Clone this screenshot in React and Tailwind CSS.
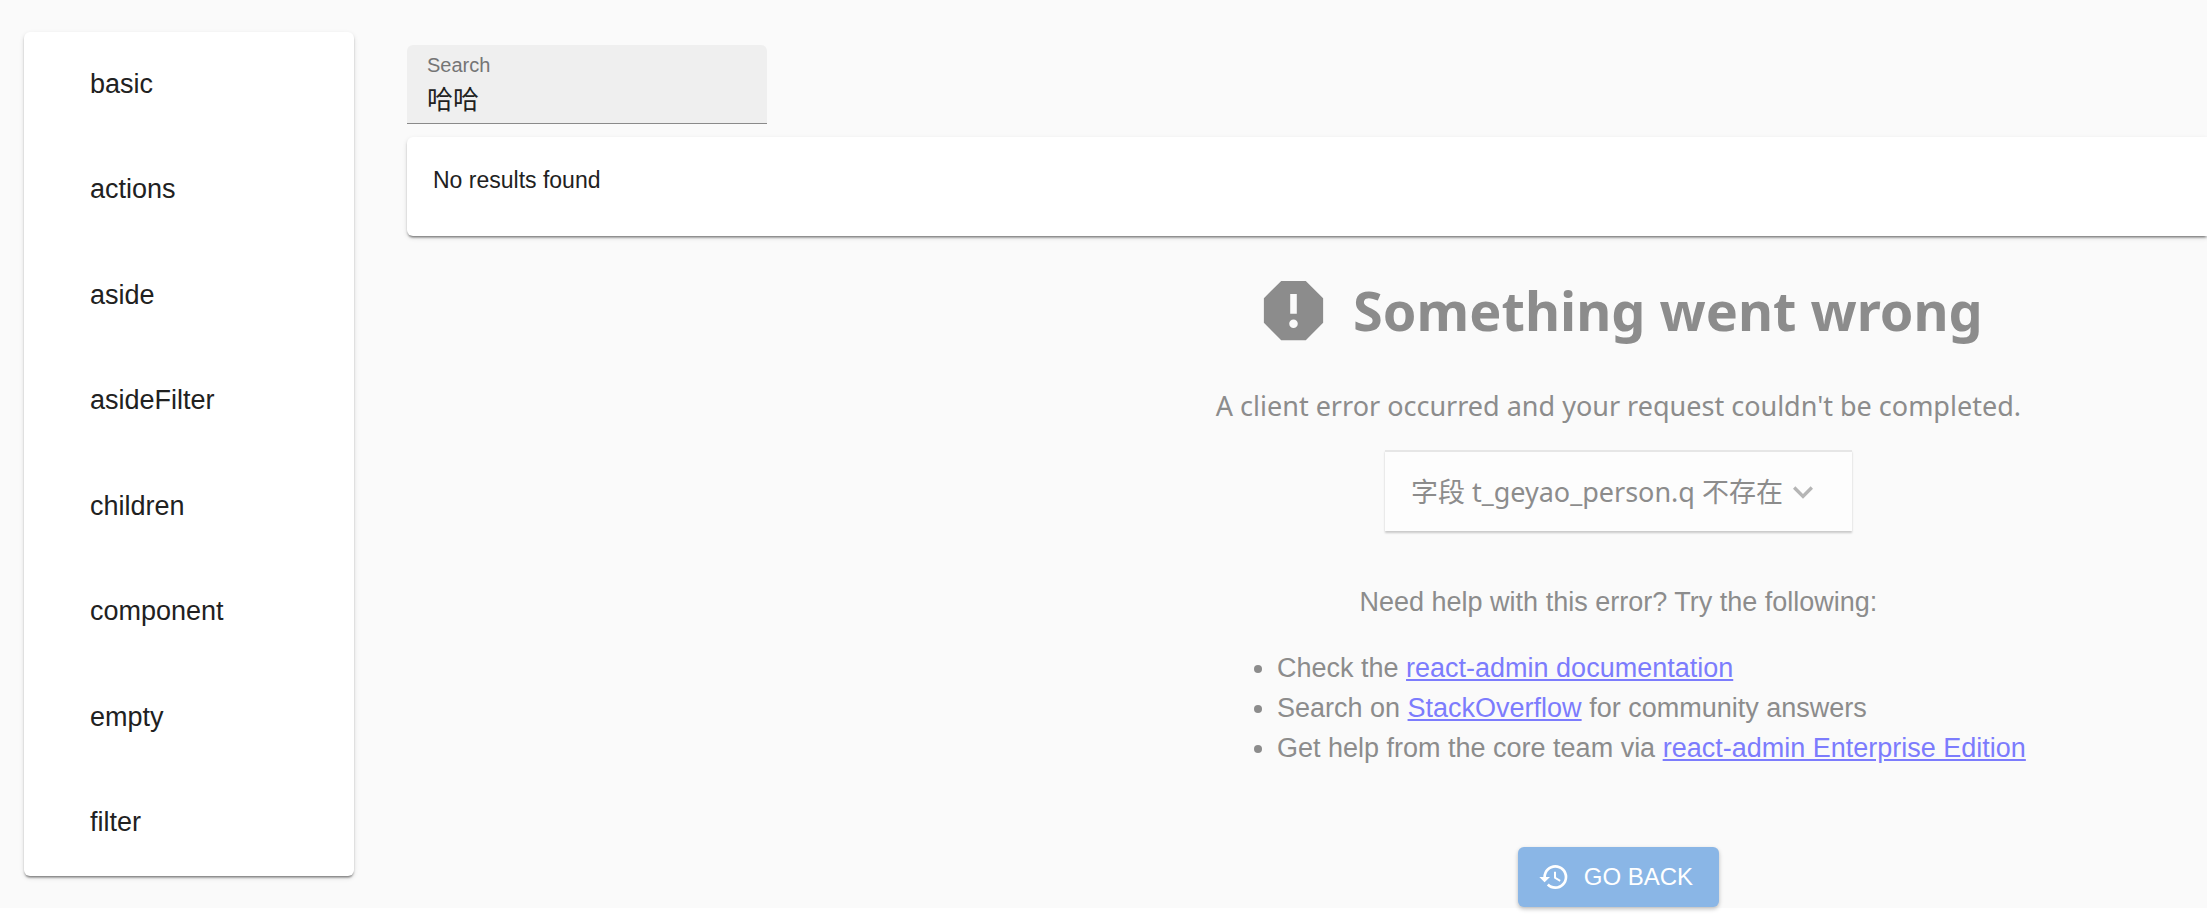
import { useState } from 'react';
import { MdExpandMore, MdHistory, MdReport } from 'react-icons/md';

const MENU = ['basic', 'actions', 'aside', 'asideFilter', 'children', 'component', 'empty', 'filter'];

const HELP_LINKS = [
  { before: 'Check the ', label: 'react-admin documentation', after: '' },
  { before: 'Search on ', label: 'StackOverflow', after: ' for community answers' },
  { before: 'Get help from the core team via ', label: 'react-admin Enterprise Edition', after: '' },
];

const cardShadow = 'shadow-[0_3px_2px_-2px_rgba(0,0,0,0.3),0_2px_2px_0_rgba(0,0,0,0.2),0_2px_5px_0_rgba(0,0,0,0.12)]';

function Sidebar() {
  return (
    <nav className={`flex h-[844px] w-[330px] shrink-0 flex-col rounded-md bg-white ${cardShadow}`}>
      {MENU.map((item) => (
        <a key={item} href={`#${item}`} className="flex flex-1 items-center px-[66px] pb-[2px] text-[27px] text-[#212121]">
          {item}
        </a>
      ))}
    </nav>
  );
}

function SearchField() {
  const [query, setQuery] = useState('哈哈');

  return (
    <div className="flex h-[79px] w-[360px] flex-col rounded-t-md border-b border-[#8a8a8a] bg-[#efefef] px-5 pt-2">
      <label htmlFor="search" className="text-[20px] leading-6 text-[#757575]">
        Search
      </label>
      <input
        id="search"
        value={query}
        onChange={(e) => setQuery(e.target.value)}
        className="w-full bg-transparent text-[26px] leading-[46px] text-[#212121] outline-none"
      />
    </div>
  );
}

function ErrorPanel() {
  return (
    <section className="flex flex-col items-center pl-[34.6%] text-[27px] leading-10 text-[#8c8c8c]">
      <div className="mt-[35px] flex flex-col items-center font-['Noto_Sans','Noto_Sans_CJK_SC',sans-serif]">
        <h1 className="flex items-center gap-5 text-[54px] leading-[79px] font-bold whitespace-nowrap">
          <MdReport className="size-[79px]" /> Something went wrong
        </h1>
        <p className="mt-9 whitespace-nowrap">A client error occurred and your request couldn't be completed.</p>
        <button
          type="button"
          className="mt-6 flex h-[81px] w-[467px] items-center border-t-2 border-[#e6e6e6] bg-[#fdfdfd] px-[26px] whitespace-nowrap shadow-[0_2px_2px_0_rgba(0,0,0,0.2)]"
        >
          字段 t_geyao_person.q 不存在
          <MdExpandMore className="size-10 text-[#b5b5b5]" />
        </button>
      </div>

      <p className="mt-[51px] whitespace-nowrap">Need help with this error? Try the following:</p>
      <ul className="mt-[26px] list-disc pl-[66px] whitespace-nowrap">
        {HELP_LINKS.map(({ before, label, after }) => (
          <li key={label}>
            {before}
            <a href="#help" className="text-[#7c7cfd] underline">
              {label}
            </a>
            {after}
          </li>
        ))}
      </ul>

      <button
        type="button"
        className="mt-[79px] flex h-[60px] items-center gap-[14px] rounded-md bg-[#8ab6e6] pr-[26px] pl-5 text-[24px] font-medium text-white shadow-[0_2px_4px_0_rgba(0,0,0,0.25)]"
      >
        <MdHistory className="size-8" />
        GO BACK
      </button>
    </section>
  );
}

export default function App() {
  return (
    <div className="min-h-screen bg-white font-['Liberation_Sans','Noto_Sans_CJK_SC',sans-serif]">
      <div className="flex h-[908px] items-start gap-[53px] bg-[#fafafa] pl-6">
        <div className="pt-8">
          <Sidebar />
        </div>
        <main className="min-w-0 flex-1 pt-[45px]">
          <SearchField />
          <div className={`mt-[13px] h-[99px] rounded-l-md bg-white px-[26px] pt-[26px] text-[23px] leading-[34px] text-[#212121] ${cardShadow}`}>
            No results found
          </div>
          <ErrorPanel />
        </main>
      </div>
    </div>
  );
}
